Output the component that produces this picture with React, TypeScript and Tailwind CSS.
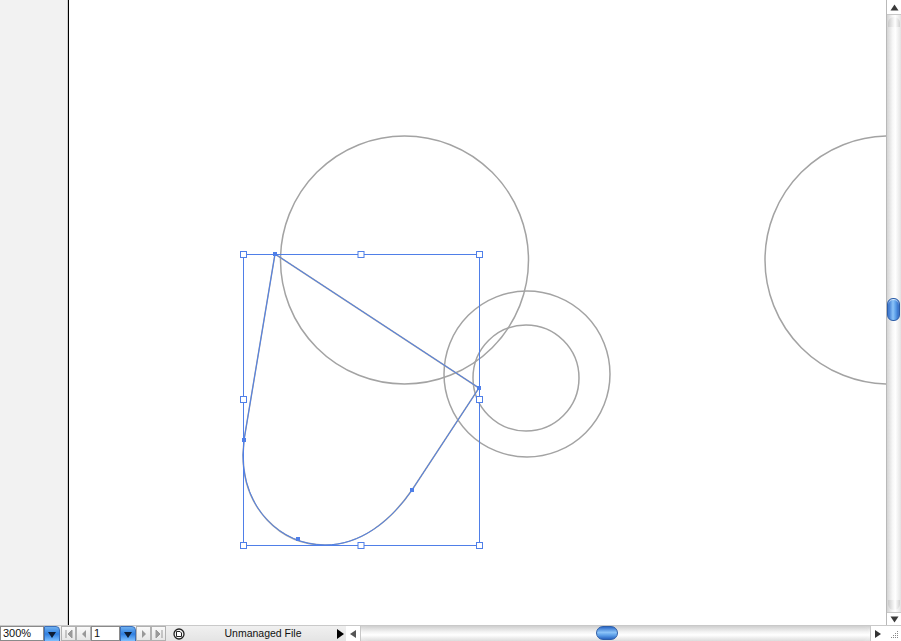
import React from "react";

const F = { fontFamily: '"Lucida Grande","Liberation Sans","DejaVu Sans",sans-serif' };

function VScroll() {
  return (
    <div className="w-[15px] h-full flex flex-col bg-[linear-gradient(to_right,#d4d4d4,#f7f7f7_40%,#ffffff_60%,#e2e2e2)] border-l border-[#b9b9b9]">
      <div className="h-[15px] flex items-center justify-center bg-white border-b border-[#c8c8c8]">
        <svg width="9" height="7" viewBox="0 0 9 7"><path d="M4.5 0.5 L8.5 6.5 L0.5 6.5 Z" fill="#3a3a3a" /></svg>
      </div>
      <div className="h-[10px] rounded-t-[7px] bg-[linear-gradient(to_right,#c8c8c8,#eeeeee_40%,#ffffff_60%,#d0d0d0)] mx-[1px] mt-[2px]" />
      <div className="flex-1 relative">
        <div className="absolute left-[0px] top-[271px] w-[13px] h-[23px] rounded-[6px] border border-[#2d5ea8] bg-[linear-gradient(to_right,#2d6ac8,#8cc4f8_45%,#5b9ee8_70%,#2a64c0)] shadow-[inset_0_1px_1px_rgba(255,255,255,0.7)]" />
      </div>
      <div className="h-[10px] rounded-b-[7px] bg-[linear-gradient(to_right,#c8c8c8,#eeeeee_40%,#ffffff_60%,#d0d0d0)] mx-[1px] mb-[2px]" />
      <div className="h-[13px] flex items-center justify-center bg-white border-t border-[#c8c8c8]">
        <svg width="9" height="7" viewBox="0 0 9 7"><path d="M0.5 0.5 L8.5 0.5 L4.5 6.5 Z" fill="#3a3a3a" /></svg>
      </div>
    </div>
  );
}

function NavBtn({ children }: { children: React.ReactNode }) {
  return (
    <div className="w-[15px] h-[15px] flex items-center justify-center border border-[#b0b0b0] bg-[linear-gradient(to_bottom,#fafafa,#e6e6e6)] text-[#9a9a9a]">
      {children}
    </div>
  );
}

function BlueDrop() {
  return (
    <div className="w-[16px] h-[16px] flex items-end justify-center pb-[3px] rounded-tr-[4px] bg-[linear-gradient(to_bottom,#6fb0f0,#2f7fe0_50%,#7fc0ff)] border border-[#3c6fb8]">
      <svg width="8" height="6" viewBox="0 0 8 6"><path d="M0 0 L8 0 L4 6 Z" fill="#0d1c33" /></svg>
    </div>
  );
}

export default function App() {
  const g = "#a3a3a3";
  const b = "#4f7fe8";
  const hs = (x: number, y: number, k: string) => (
    <rect key={k} x={x - 3} y={y - 3} width="6" height="6" fill="#fff" stroke={b} strokeWidth="1" />
  );
  const an = (x: number, y: number, k: string) => (
    <rect key={k} x={x - 2} y={y - 2} width="4" height="4" fill={b} />
  );
  const shape = "M275 254 L479 388 L412 490 C390 522 360 545 325 545 C280 545 243 508 243 455 L244 440 Z";
  return (
    <div className="w-[901px] h-[641px] flex flex-col overflow-hidden bg-white" style={F}>
      <div className="flex flex-1 min-h-0">
        <div className="w-[67px] bg-[#f2f2f2]" />
        <div className="w-[1px] bg-[#cfcfcf]" />
        <div className="w-[1px] bg-black" />
        <div className="flex-1 bg-white relative">
          <svg width="817" height="625" viewBox="69 0 817 625" className="block">
            <g fill="none" stroke={g} strokeWidth="1.5">
              <circle cx="404.5" cy="260" r="124" />
              <circle cx="527" cy="374" r="83" />
              <circle cx="526" cy="378" r="53" />
              <circle cx="889" cy="260" r="124" />
              <path d={shape} />
            </g>
            <g fill="none" stroke={b} strokeWidth="1">
              <rect x="243.5" y="254.5" width="236" height="291" />
              <path d={shape} />
            </g>
            {hs(243.5, 254.5, "a")}
            {hs(361, 254.5, "b")}
            {hs(479.5, 254.5, "c")}
            {hs(243.5, 399.5, "d")}
            {hs(479.5, 399.5, "e")}
            {hs(243.5, 545.5, "f")}
            {hs(361, 545.5, "g")}
            {hs(479.5, 545.5, "h")}
            {an(275, 254, "1")}
            {an(479, 388, "2")}
            {an(412, 490, "3")}
            {an(298, 539, "4")}
            {an(244, 440, "5")}
          </svg>
        </div>
        <VScroll />
      </div>
      <div className="h-[16px] flex items-stretch border-t border-[#c9c9c9] bg-[linear-gradient(to_bottom,#f0f0f0,#e4e4e4)] text-[11px] leading-none text-[#111]">
        <div className="w-[44px] bg-white border border-[#8a8a8a] flex items-center pl-[2px]">300%</div>
        <BlueDrop />
        <div className="w-[1px]" />
        <NavBtn>
          <svg width="8" height="8" viewBox="0 0 8 8"><path d="M1 0 V8 M7 0 L3 4 L7 8 Z" stroke="#999" fill="#999" strokeWidth="1" /></svg>
        </NavBtn>
        <NavBtn>
          <svg width="8" height="8" viewBox="0 0 8 8"><path d="M6 0 L2 4 L6 8 Z" fill="#999" /></svg>
        </NavBtn>
        <div className="w-[29px] bg-white border border-[#8a8a8a] flex items-center pl-[2px]">1</div>
        <BlueDrop />
        <NavBtn>
          <svg width="8" height="8" viewBox="0 0 8 8"><path d="M2 0 L6 4 L2 8 Z" fill="#999" /></svg>
        </NavBtn>
        <NavBtn>
          <svg width="8" height="8" viewBox="0 0 8 8"><path d="M7 0 V8 M1 0 L5 4 L1 8 Z" stroke="#999" fill="#999" strokeWidth="1" /></svg>
        </NavBtn>
        <div className="w-[178px] flex items-center pl-[7px]">
          <svg width="12" height="12" viewBox="0 0 12 12">
            <circle cx="6" cy="6" r="5" fill="#f4f4f4" stroke="#222" strokeWidth="1.3" />
            <path d="M3.5 3.5 H7 L8.5 5 V8.5 H3.5 Z" fill="#fff" stroke="#222" strokeWidth="1" />
          </svg>
          <div className="flex-1 text-center text-[10.5px] text-[#111] pl-[4px]" style={{ fontFamily: '"Liberation Sans",sans-serif' }}>Unmanaged File</div>
          <svg width="7" height="10" viewBox="0 0 7 10"><path d="M0 0 L7 5 L0 10 Z" fill="#000" /></svg>
        </div>
        <div className="w-[2px]" />
        <div className="flex-1 flex items-stretch bg-[linear-gradient(to_bottom,#d0d0d0,#f8f8f8_40%,#ffffff_60%,#e0e0e0)]">
          <div className="w-[15px] flex items-center justify-center bg-white border-r border-[#c8c8c8]">
            <svg width="6" height="8" viewBox="0 0 6 8"><path d="M6 0 L0 4 L6 8 Z" fill="#555" /></svg>
          </div>
          <div className="flex-1 relative mx-[1px] rounded-[8px] bg-[linear-gradient(to_bottom,#cfcfcf,#f4f4f4_40%,#ffffff_60%,#dcdcdc)]">
            <div className="absolute left-[234px] top-[0px] w-[22px] h-[14px] rounded-[7px] border border-[#2d5ea8] bg-[linear-gradient(to_bottom,#2d6ac8,#8cc4f8_45%,#5b9ee8_70%,#2a64c0)]" />
          </div>
          <div className="w-[15px] flex items-center justify-center bg-white border-l border-[#c8c8c8]">
            <svg width="6" height="8" viewBox="0 0 6 8"><path d="M0 0 L6 4 L0 8 Z" fill="#333" /></svg>
          </div>
          <div className="w-[16px] bg-white flex items-end justify-end p-[2px]">
            <svg width="9" height="9" viewBox="0 0 9 9" fill="#888">
              <rect x="7" y="1" width="1" height="1" />
              <rect x="5" y="3" width="1" height="1" /><rect x="7" y="3" width="1" height="1" />
              <rect x="3" y="5" width="1" height="1" /><rect x="5" y="5" width="1" height="1" /><rect x="7" y="5" width="1" height="1" />
              <rect x="1" y="7" width="1" height="1" /><rect x="3" y="7" width="1" height="1" /><rect x="5" y="7" width="1" height="1" /><rect x="7" y="7" width="1" height="1" />
            </svg>
          </div>
        </div>
      </div>
    </div>
  );
}
